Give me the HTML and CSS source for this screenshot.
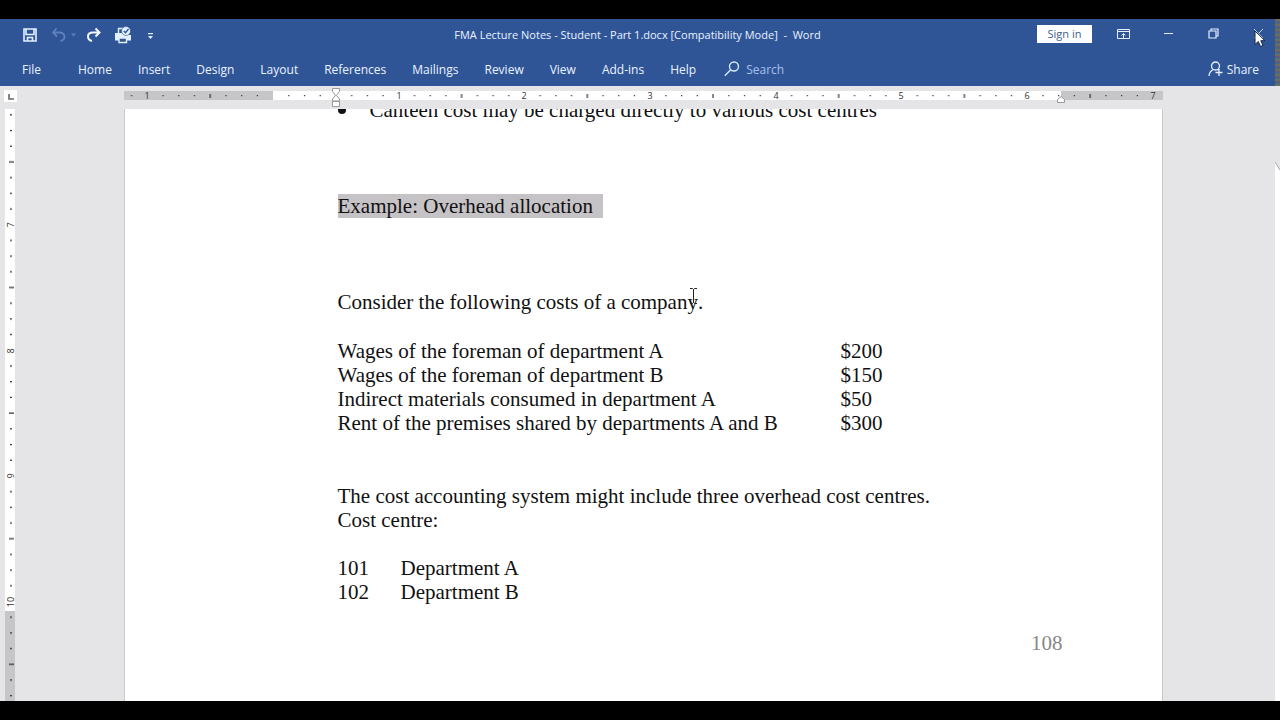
FILE: index.html
```html
<!DOCTYPE html>
<html lang="en">
<head>
<meta charset="utf-8">
<title>FMA Lecture Notes - Student - Part 1.docx - Word</title>
<link rel="stylesheet" href="styles.css">
</head>
<body>
<div class="screen">
  <div class="app">
    <header class="header">
      <div class="titlebar">
        <div class="quick">
          <button class="icon-btn" aria-label="Save"><svg width="16" height="16" fill="none" stroke="#e3f1ff" stroke-width="1.6"><path d="M2 2h12v12H2zM4 2v5.500h8V2M5.500 14v-3.500h5V14"/></svg></button>
          <button class="icon-btn" aria-label="Undo"><svg width="27" height="16" fill="none" stroke="#5f80bb" stroke-width="1.8"><path d="M7.500 1.500 4 5.500l4 4M4.500 5.500H11q4.500.5 4.500 4.500 0 3-4 4"/><path d="m22 6.500 2.500 3 2.500-3z" fill="#5f80bb" stroke="none"/></svg></button>
          <button class="icon-btn" aria-label="Redo"><svg width="14" height="16" fill="none" stroke="#f2f8ff" stroke-width="2"><path d="m8.500 1.500 4 4-4 4M12 5.500H6q-5 0-5 4 0 3.500 4 4.500"/></svg></button>
          <button class="icon-btn" aria-label="Print preview"><svg width="20" height="18" fill="none" stroke="#e3f1ff" stroke-width="1.400"><path d="M6.500 7V2.500H11"/><path d="M3 7h7l2 2h7v5.500H3z" fill="#e3f1ff" stroke="none"/><path d="M7 12h7.500v4.500H7z" fill="#2f5597"/><circle cx="14" cy="5" r="4.500" fill="#e3f1ff" stroke="#2f5597" stroke-width=".6"/><path d="m11.800 5 1.700 1.700L16.500 3" stroke="#2f5597"/></svg></button>
          <button class="icon-btn" aria-label="Customize toolbar"><svg width="14" height="16"><path d="M5 6h5v1.200H5zM5 9h5l-2.500 3z" fill="#e3f1ff"/></svg></button>
        </div>
        <div class="doc-title">FMA Lecture Notes - Student - Part 1.docx [Compatibility Mode] &nbsp;-&nbsp; Word</div>
        <div class="window-tools">
          <button class="sign-in">Sign in</button>
          <div class="window-buttons">
            <button class="icon-btn" aria-label="Ribbon display options"><svg width="18" height="16" fill="none" stroke="#e3f1ff"><path d="M2.500 3.500h12v9h-12zM2.500 5.500h12M8.500 12V7.500M6.500 9.500l2-2 2 2"/></svg></button>
            <button class="icon-btn" aria-label="Minimize"><svg width="18" height="16"><path d="M4 7h9v1H4z" fill="#e3f1ff"/></svg></button>
            <button class="icon-btn" aria-label="Restore"><svg width="18" height="16" fill="none" stroke="#e3f1ff" stroke-width="1.200"><path d="M4 5h7v7H4zM6 5V3h7v7h-2"/></svg></button>
            <button class="icon-btn close" aria-label="Close"><svg width="18" height="16" fill="none" stroke="#b9cdea"><path d="m4 3 9 9M13 3l-9 9"/></svg>
              <svg class="pointer" width="14" height="18"><path d="M1 1v13.500l3.300-3 2.200 5 2.500-1-2.200-4.800H11z" fill="#fff" stroke="#14233f"/></svg></button>
          </div>
        </div>
      </div>
      <div class="menu-row">
        <nav class="tabs">
          <button class="tab tab-file">File</button>
          <button class="tab">Home</button>
          <button class="tab">Insert</button>
          <button class="tab">Design</button>
          <button class="tab">Layout</button>
          <button class="tab">References</button>
          <button class="tab">Mailings</button>
          <button class="tab">Review</button>
          <button class="tab">View</button>
          <button class="tab">Add-ins</button>
          <button class="tab">Help</button>
        </nav>
        <label class="search">
          <svg width="16" height="16" fill="none" stroke="#d4ebff" stroke-width="1.400"><circle cx="10" cy="5.500" r="4.500"/><path d="M6.700 8.700.8 14.800"/></svg>
          <input type="text" placeholder="Search" aria-label="Search">
        </label>
        <button class="share"><svg width="16" height="16" fill="none" stroke="#e3f1ff" stroke-width="1.300"><circle cx="7.500" cy="5" r="4"/><path d="M1 15q.5-5 4.500-6.500M9.500 8.500l1.500 1M11 8v7M7.500 11.500h7"/></svg>Share</button>
      </div>
    </header>
    <div class="ruler-row">
      <button class="tab-stop" aria-label="Tab selector"><svg width="13" height="12"><path d="M5 4v5h5" fill="none" stroke="#666" stroke-width="1.600"/></svg></button>
      <div class="ruler-track">
        <svg class="ruler" width="1039" height="20">
          <defs><pattern id="inch" patternUnits="userSpaceOnUse" x="149" width="125.700" height="20"><path d="M15.200 9h1.200v1.200h-1.200zM30.900 9h1.200v1.200h-1.200zM46.600 9h1.200v1.200h-1.200zM62.300 8h1.200v4h-1.200zM78.100 9h1.200v1.200h-1.200zM93.800 9h1.200v1.200h-1.200zM109.500 9h1.200v1.200h-1.200z" fill="#333"/></pattern></defs>
          <path d="M0 5h1039v9H0z" fill="#c6c5c8"/><path d="M149 5h788v9H149z" fill="#fff"/>
          <path d="M0 5h1039v9H0z" fill="url(#inch)"/>
          <g class="ruler-num"><text x="23" y="13">1</text><text x="275" y="13">1</text><text x="400" y="13">2</text><text x="526" y="13">3</text><text x="652" y="13">4</text><text x="777" y="13">5</text><text x="903" y="13">6</text><text x="1029" y="13">7</text></g>
          <path d="M208.500 2.500h7v3l-3 4 3 3.500v2h-7v-2l3-3.500-3-4zM208.500 15.500h7v5h-7z" fill="#fff" stroke="#999"/>
          <path d="m933.500 16.500v-3l3.500-3 3.500 3v3z" fill="#fff" stroke="#999"/>
        </svg>
      </div>
    </div>
    <main class="work">
      <svg class="v-ruler" width="15" height="592">
        <defs><pattern id="vinch" patternUnits="userSpaceOnUse" y="-10" width="15" height="125.600"><path d="M10 15.200h2v1.200h-2zM10 30.900h2v1.200h-2zM10 46.600h2v1.200h-2zM9 62.300h5v1.200H9zM10 78.100h2v1.200h-2zM10 93.800h2v1.200h-2zM10 109.500h2v1.200h-2z" fill="#333"/></pattern></defs>
        <path d="M5 0h10v592H5z" fill="#c6c5c8"/><path d="M5 0h10v502H5z" fill="#fff"/>
        <path d="M5 0h10v592H5z" fill="url(#vinch)"/>
        <g class="ruler-num"><text transform="translate(14 116) rotate(-90)">7</text><text transform="translate(14 242) rotate(-90)">8</text><text transform="translate(14 367) rotate(-90)">9</text><text transform="translate(14 493) rotate(-90)">10</text></g>
      </svg>
      <div class="canvas">
        <article class="page">
          <ul class="bullets"><li>Canteen cost may be charged directly to various cost centres</li></ul>
          <h1 class="heading"><span class="selected">Example: Overhead allocation&nbsp; </span></h1>
          <p class="intro">Consider the following costs of a compan<span class="caret-spot">y<svg class="ibeam" width="9" height="17" fill="none" stroke="#222"><path d="M1 .5h2.500l1 1 1-1H8M4.500 1v14M1 15.500h2.500l1-1 1 1H8"/></svg></span>.</p>
          <table class="costs">
            <tr><td>Wages of the foreman of department A</td><td>$200</td></tr>
            <tr><td>Wages of the foreman of department B</td><td>$150</td></tr>
            <tr><td>Indirect materials consumed in department A</td><td>$50</td></tr>
            <tr><td>Rent of the premises shared by departments A and B</td><td>$300</td></tr>
          </table>
          <p>The cost accounting system might include three overhead cost centres.</p>
          <p>Cost centre:</p>
          <table class="centres">
            <tr><td>101</td><td>Department A</td></tr>
            <tr><td>102</td><td>Department B</td></tr>
          </table>
          <footer class="page-number">108</footer>
        </article>
      </div>
    </main>
  </div>
  <aside class="edge">
    <div class="edge-top"></div>
    <div class="edge-mid"></div>
    <svg class="edge-corner" width="5" height="9"><path d="M0 0h5v9z" fill="#e5e5e7"/><path d="m0 0 5 8" stroke="#aaa"/></svg>
  </aside>
</div>
</body>
</html>
```

FILE: styles.css
```css
* { box-sizing: border-box; }
body {
  margin: 0;
  background: #000;
  font-family: "Open Sans", "Noto Sans", sans-serif;
  font-size: 12px;
}
button, input {
  font: inherit;
  color: inherit;
  background: none;
  border: 0;
  padding: 0;
}
svg { display: block; }
.screen {
  display: flex;
  height: 100vh;
  padding: 19px 0;
  overflow: hidden;
}
.app {
  flex: 1;
  min-width: 0;
  display: flex;
  flex-direction: column;
  background: #e5e5e7;
}

.header { background: #2f5597; color: #eaf3ff; }
.titlebar {
  display: grid;
  grid-template-columns: 1fr auto 1fr;
  align-items: center;
  height: 30px;
}
.quick { display: flex; align-items: center; gap: 11px; padding: 2px 0 0 22px; }
.doc-title { font-size: 11px; white-space: pre; }
.window-tools {
  display: flex;
  justify-content: flex-end;
  align-items: center;
  gap: 23px;
  padding-right: 7px;
}
.window-buttons { display: flex; gap: 27px; }
.sign-in {
  width: 55px;
  height: 18px;
  background: #fff;
  color: #42608f;
  font-size: 11px;
  line-height: 18px;
}
.close { position: relative; }
.pointer { position: absolute; left: 4px; top: 4px; }

.menu-row { display: flex; align-items: center; height: 37px; padding: 3px 16px 0 22px; }
.tabs { display: flex; gap: 26px; }
.tab-file { margin-right: 11px; }
.search { display: flex; align-items: center; gap: 6px; margin-left: 28px; }
.search input { width: 120px; }
.search input::placeholder { color: #a9c0ea; opacity: 1; }
.share { display: flex; align-items: center; gap: 3px; margin-left: auto; }

.ruler-row { display: flex; height: 23px; }
.tab-stop { width: 15px; padding: 4px 0 0 4px; align-self: flex-start; }
.tab-stop svg { background: #fff; }
.ruler-track {
  flex: 1;
  display: flex;
  justify-content: center;
  padding-right: 4px;
}
.ruler { overflow: visible; flex: none; position: relative; z-index: 1; }
.ruler-num { font-size: 9px; fill: #333; text-anchor: middle; }

.work { flex: 1; min-height: 0; display: flex; overflow: hidden; }
.v-ruler { flex: none; }
.canvas { flex: 1; display: flex; justify-content: center; padding-right: 4px; }
.page {
  flex: none;
  width: 1039px;
  padding: 0 99px 0 213px;
  background: #fff;
  border: solid #c8c8ca;
  border-width: 0 1px;
  overflow: hidden;
  font-family: "Liberation Serif", serif;
  font-size: 21px;
  line-height: 24px;
  color: #111;
}
.page p { margin: 0; }
.bullets { margin: -11px 0 72px; padding: 0; list-style: none; }
.bullets li { display: flex; align-items: center; gap: 24px; }
.bullets li::before {
  content: "";
  width: 8px;
  height: 8px;
  border-radius: 50%;
  background: #111;
}
.heading { margin: 0 0 72px; font-size: 21px; font-weight: normal; }
.selected { background: #c6c3c6; white-space: pre; }
.page .intro { margin-bottom: 25px; }
.caret-spot { position: relative; }
.ibeam { position: absolute; left: 2px; top: -2px; }
.page table { border-collapse: collapse; }
.page td { padding: 0; }
.costs { margin-bottom: 49px; }
.costs td:first-child { width: 503px; }
.centres { margin: 24px 0 27px; }
.centres td:first-child { width: 63px; }
.page-number { text-align: right; color: #888; }

.edge { width: 5px; background: #fff; }
.edge-top {
  height: 67px;
  background: repeating-linear-gradient(#66705f 0 2px, #6b5870 2px 3px, #4f6680 3px 5px);
}
.edge-mid { height: 76px; background: #e5e5e7; }
```
